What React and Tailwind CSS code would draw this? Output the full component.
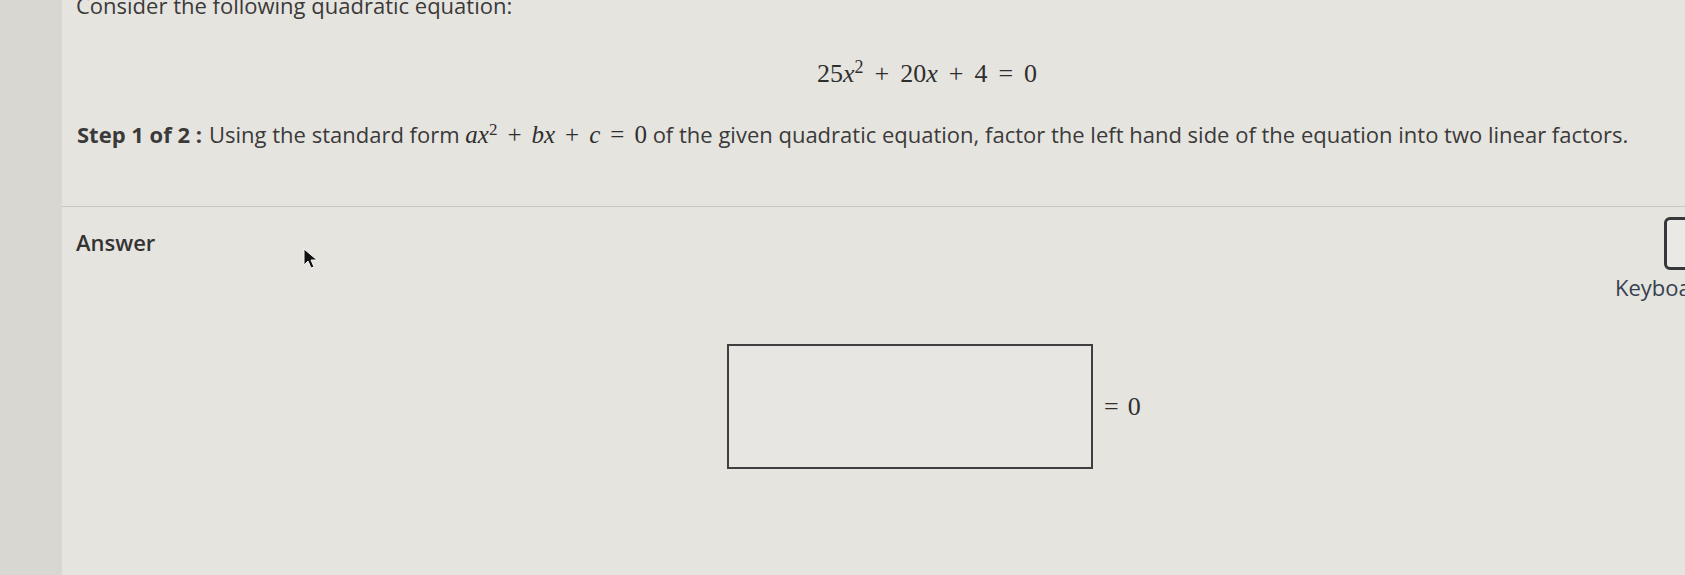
import React from 'react';

const serif = { fontFamily: '"Liberation Serif", "Times New Roman", serif' };

function Op({ children }) {
    return <span className="mx-[11px]">{children}</span>;
}

function SmallOp({ children }) {
    return <span className="mx-[10px]">{children}</span>;
}

function Cursor() {
    return (
        <svg className="absolute left-[241px] top-[248px]" width="16" height="22" viewBox="0 0 16 22" aria-hidden="true">
            <path d="M1 1 L1 17 L5 13 L8 20 L11 19 L8 12 L14 12 Z" fill="#111" stroke="#f4f4f2" strokeWidth="1" />
        </svg>
    );
}

export default function App() {
    return (
        <div
            className="w-[1685px] h-[575px] overflow-hidden flex bg-[#e5e3de] text-[#3a3a3a]"
            style={{ fontFamily: '"Open Sans", "Noto Sans", sans-serif' }}
        >
            <div className="w-[62px] shrink-0 bg-[#d9d7d2]" />

            <div className="relative flex-1 bg-[#e6e4df]">
                <div className="-mt-[11px] pl-[14px] text-[22px] leading-[32px]">
                    Consider the following quadratic equation:
                </div>

                <div className="mt-[37px] pl-[755px] text-[26px] leading-[32px] text-[#2f2f2f]" style={serif}>
                    25<i>x</i><sup className="text-[18px]">2</sup>
                    <Op>+</Op>20<i>x</i>
                    <Op>+</Op>4
                    <Op>=</Op>0
                </div>

                <div className="mt-[28px] pl-[15px] text-[22px] leading-[32px] whitespace-nowrap">
                    <span className="font-bold">Step 1 of 2 :</span>
                    <span className="ml-[7px]">Using the standard form </span>
                    <span className="text-[25px] text-[#2f2f2f]" style={serif}>
                        <i>ax</i><sup className="text-[17px]">2</sup>
                        <SmallOp>+</SmallOp><i>bx</i>
                        <SmallOp>+</SmallOp><i>c</i>
                        <SmallOp>=</SmallOp>0
                    </span>
                    <span> of the given quadratic equation, factor the left hand side of the equation into two linear factors.</span>
                </div>

                <div className="mt-[55px] border-t border-[#c9c7c2]" />

                <div className="flex justify-between">
                    <div className="mt-[19px] pl-[14px] text-[22px] leading-[32px] font-semibold text-[#333]">
                        Answer
                    </div>
                    <div className="mt-[10px] w-[70px] shrink-0 flex flex-col">
                        <div className="ml-[49px] w-[60px] h-[53px] rounded-[6px] border-[3px] border-[#35373a] bg-[#ebe9e5]" />
                        <div className="mt-[1px] text-[22px] leading-[32px] text-[#35414f] whitespace-nowrap">
                            Keyboard
                        </div>
                    </div>
                </div>

                <div className="mt-[41px] pl-[665px] flex items-center">
                    <div className="w-[366px] h-[125px] border-2 border-[#3f3f3f] bg-[#e8e6e2]" />
                    <div className="ml-[11px] text-[26px] leading-[32px] text-[#2f2f2f]" style={serif}>
                        <span className="mr-[9px]">=</span>0
                    </div>
                </div>

                <Cursor />
            </div>
        </div>
    );
}
